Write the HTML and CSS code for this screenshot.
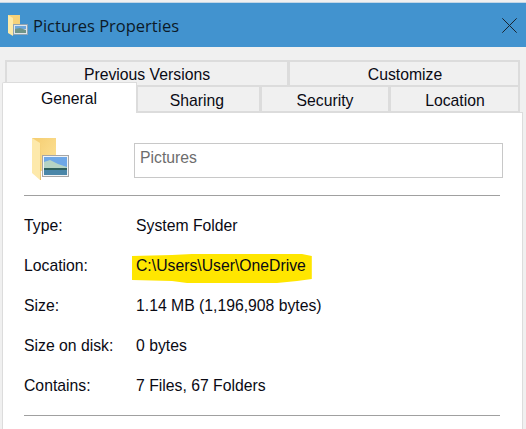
FILE: index.html
```html
<!DOCTYPE html>
<html lang="en">
<head>
<meta charset="utf-8">
<title>Pictures Properties</title>
<link rel="stylesheet" href="styles.css">
</head>
<body>
<div class="window">
  <header class="titlebar">
    <svg class="title-icon" width="20" height="21" viewBox="0 0 20 21">
      <path d="M0 0H12V17H0Z" fill="#f6d27a"/>
      <path d="M0 0L5 3V21L0 18Z" fill="#fdeaa8"/>
      <rect x="5.5" y="9.5" width="14" height="10" fill="#dfe6ea" stroke="#8fa3b3"/>
      <rect x="7" y="11" width="11" height="3" fill="#6ba6dc"/>
      <path d="M7 14L12 13L18 15V18H7Z" fill="#6f9488"/>
    </svg>
    <h1 class="title">Pictures Properties</h1>
    <svg class="close" width="15" height="15" viewBox="0 0 15 15">
      <path d="M.3.3L14.7 14.7M14.7.3L.3 14.7" stroke="#1a2530" stroke-width="1" fill="none"/>
    </svg>
  </header>
  <div class="tabs">
    <div class="tab-row back">
      <div class="tab w-a">Previous Versions</div>
      <div class="tab w-b">Customize</div>
    </div>
    <div class="tab-row front">
      <div class="tab active">General</div>
      <div class="tab w-c"><span class="label">Sharing</span></div>
      <div class="tab w-d"><span class="label">Security</span></div>
      <div class="tab w-e"><span class="label">Location</span></div>
    </div>
  </div>
  <main class="panel">
    <div class="head">
      <svg class="big-icon" width="40" height="44" viewBox="0 0 40 44">
        <defs>
          <linearGradient id="fold" x1="0" y1="0" x2="1" y2="1">
            <stop offset="0" stop-color="#f5cd70"/>
            <stop offset="1" stop-color="#fde39a"/>
          </linearGradient>
        </defs>
        <path d="M3 1H27V34H3Z" fill="url(#fold)"/>
        <path d="M3 1L11 6V43L3 36Z" fill="#fde9ab"/>
        <path d="M11 6L12 43L11 43Z" fill="#e8c36a"/>
        <rect x="13.5" y="18.5" width="26" height="21" fill="#f2f4f5" stroke="#a6a6a6"/>
        <rect x="15" y="20" width="23" height="18" fill="#6ea7e6"/>
        <path d="M15 25L21 23L29 27L38 30V38H15Z" fill="#b5d3c4"/>
        <path d="M15 31H38V33H15Z" fill="#2e5f5c"/>
        <rect x="15" y="33" width="23" height="5" fill="#4a86a8"/>
      </svg>
      <div class="name">Pictures</div>
    </div>
    <hr class="rule">
    <dl class="props">
      <div class="row"><dt>Type:</dt><dd>System Folder</dd></div>
      <div class="row"><dt>Location:</dt><dd><span class="mark">C:\Users\User\OneDrive</span></dd></div>
      <div class="row"><dt>Size:</dt><dd>1.14 MB (1,196,908 bytes)</dd></div>
      <div class="row"><dt>Size on disk:</dt><dd>0 bytes</dd></div>
      <div class="row"><dt>Contains:</dt><dd>7 Files, 67 Folders</dd></div>
    </dl>
    <hr class="rule">
  </main>
</div>
</body>
</html>
```
FILE: styles.css
```css
html, body { margin: 0; padding: 0; }
body {
  width: 526px;
  height: 429px;
  overflow: hidden;
  background: #f0f0f0;
  font-family: "Liberation Sans", Arial, sans-serif;
  font-size: 15.75px;
  color: #0a0a14;
}
.window { display: flex; flex-direction: column; height: 429px; overflow: hidden; background: #f0f0f0; }
.titlebar {
  flex: none;
  height: 45px;
  margin-top: 2px;
  border-top: 1px solid #c3d6e6;
  background: #4293cf;
  display: flex;
  align-items: center;
  padding: 0 9px 0 8px;
  box-sizing: border-box;
}
.title-icon { flex: none; margin-right: 5px; }
.title { margin: 0; font-family: "Open Sans", sans-serif; font-weight: 400; font-size: 16.5px; flex: 1; color: #0c1a28; }
.close { flex: none; }
.tabs { flex: none; height: 65px; padding-top: 13px; box-sizing: border-box; }
.tab-row { display: flex; height: 26px; }
.back { margin-left: 5px; }
.tab {
  box-sizing: border-box;
  text-align: center;
  line-height: 26px;
  border: 1px solid #dcdcdc;
  border-left-width: 2px;
  background: #f0f0f0;
  height: 100%;
}
.w-a { width: 283px; border-top-width: 2px; }
.w-b { width: 232px; border-top-width: 2px; border-right-width: 2px; padding-left: 2px; }
.front { margin-left: 136px; position: relative; }
.w-c { width: 124px; padding: 1px 3px 0 0; }
.w-d { width: 129px; padding-top: 1px; }
.w-e { width: 131px; padding: 1px 0 0 1px; border-right-width: 2px; }
.label { display: block; height: 21px; overflow: hidden; }
.active {
  position: absolute;
  left: -134px;
  top: -4px;
  width: 135px;
  height: 31px;
  line-height: 32px;
  padding-right: 1px;
  background: #fff;
  border: 1px solid #dcdcdc;
  border-bottom: 0;
  z-index: 2;
  border-top-left-radius: 2px;
}
.panel {
  flex: 1;
  margin-left: 2px;
  width: 521px;
  box-sizing: border-box;
  background: #fff;
  border: 1px solid #dcdcdc;
  border-bottom: 0;
  padding: 0 22px 0 21px;
}
.head { display: flex; align-items: flex-start; height: 82px; }
.big-icon { flex: none; margin: 24px 0 0 5px; }
.name {
  flex: none;
  margin: 30px 0 0 65px;
  width: 369px;
  height: 35px;
  box-sizing: border-box;
  border: 1px solid #c8c8c8;
  padding-left: 5px;
  line-height: 27px;
  color: #6d6d6d;
}
.rule { margin: 0; border: 0; height: 1px; background: #a0a0a0; }
.props { margin: 10px 0 9px; }
.row { display: flex; height: 40px; align-items: center; }
dt { width: 112px; }
dd { margin: 0; }
.mark {
  display: inline-block;
  background: #ffe600;
  padding: 3px 6px 8px 4px;
  margin: -3px -6px -8px -4px;
  clip-path: polygon(0 2px, 40px 1px, 60px 0, 170px 0, 100% 2px, 100% 25px, 165px 27px, 145px 29px, 55px 29px, 40px 27px, 0 26px);
}
```
